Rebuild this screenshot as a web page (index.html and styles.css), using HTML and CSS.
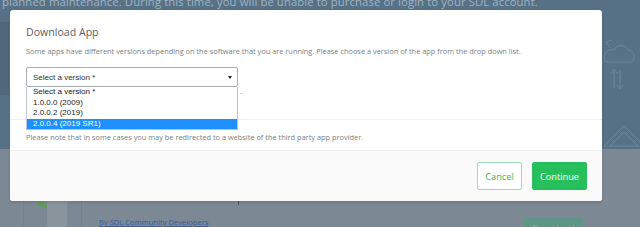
FILE: index.html
```html
<!DOCTYPE html>
<html lang="en">
<head>
<meta charset="utf-8">
<title>Download App</title>
<link rel="stylesheet" href="styles.css">
</head>
<body>
<div class="page">
  <div class="hero">
    <div class="strip"></div>
    <p class="notice">planned maintenance. During this time, you will be unable to purchase or login to your SDL account.</p>
    <svg class="art" width="40" height="130" viewBox="0 0 40 130" fill="none" stroke="#6d8799" stroke-width="1">
      <path d="M6 40 C2 34 6 26 14 28 C16 22 26 22 28 28 C34 28 36 36 32 40 Z"/>
      <path d="M10 26 L6 20 L12 18"/>
      <path d="M14 48 V66 M11 51 L14 47 L17 51 M20 48 V66 M17 63 L20 67 L23 63"/>
      <path d="M4 124 L24 104 L44 124 Z M10 124 L24 110 L38 124"/>
    </svg>
  </div>
  <div class="lower">
    <div class="card">
      <div class="thumb"><span class="stripe"></span><span class="img"></span></div>
      <div class="info">
        <span class="tick"></span>
        <a class="author">By SDL Community Developers</a>
      </div>
      <span class="dl-btn">Download</span>
    </div>
  </div>
</div>

<div class="modal">
  <div class="modal-body">
    <h2 class="title">Download App</h2>
    <p class="desc">Some apps have different versions depending on the software that you are running. Please choose a version of the app from the drop down list.</p>
    <div class="select-wrap">
      <div class="select"><span>Select a version *</span><span class="arrow"></span></div>
      <ul class="options">
        <li>Select a version *</li>
        <li>1.0.0.0 (2009)</li>
        <li>2.0.0.2 (2019)</li>
        <li class="active">2.0.0.4 (2019 SR1)</li>
      </ul>
    </div>
    <div class="behind"><span>.</span></div>
  </div>
  <div class="modal-note">
    <p>Please note that in some cases you may be redirected to a website of the third party app provider.</p>
  </div>
  <div class="modal-footer">
    <button class="btn btn-cancel">Cancel</button>
    <button class="btn btn-continue">Continue</button>
  </div>
</div>
</body>
</html>
```
FILE: styles.css
```css
* { box-sizing: border-box; }
html, body { margin: 0; padding: 0; }
body {
  width: 640px;
  height: 227px;
  overflow: hidden;
  font-family: "Open Sans", "Noto Sans", sans-serif;
  background: #7c8894;
  position: relative;
}
.page { display: flex; flex-direction: column; height: 227px; }
.hero {
  height: 149px;
  background: #577286;
  position: relative;
  overflow: hidden;
}
.strip {
  position: absolute;
  left: 0; top: 22px;
  width: 9px; height: 73px;
  background: #4f687b;
}
.notice {
  margin: -6px 0 0 2px;
  font-size: 11.3px;
  line-height: 16px;
  color: #9fb3c2;
  white-space: nowrap;
  letter-spacing: 0.1px;
}
.art { position: absolute; right: 0; top: 22px; }
.lower { flex: 1; position: relative; }
.card { display: flex; height: 100%; }
.thumb {
  width: 59px;
  border-right: 1px solid #75818d;
  position: relative;
  margin-left: 23px;
  border-left: 1px solid #75818d;
}
.stripe {
  position: absolute; left: 13px; top: 54px;
  width: 12px; height: 4px; background: #5f9a5a; transform: rotate(20deg);
}
.img {
  position: absolute; left: 23px; top: 52px; width: 20px; height: 30px; background: #8a949d;
}
.info { flex: 1; position: relative; }
.tick { position: absolute; left: 156px; top: 52px; width: 1px; height: 4px; background: #4a535c; }
.author {
  position: absolute; left: 17px; top: 68px;
  font-size: 7.6px; line-height: 10px; color: #3b5c95; text-decoration: underline;
}
.dl-btn {
  position: absolute; left: 524px; top: 68px;
  width: 59px; height: 20px; border-radius: 2px;
  background: #5e9686; color: #7fb0a2; font-size: 9px;
  display: flex; justify-content: center; padding-top: 5px;
}

.modal {
  position: absolute;
  left: 10px; top: 10px;
  width: 592px; height: 191px;
  background: #fff;
  border-radius: 3px;
  display: flex; flex-direction: column;
  overflow: visible;
  box-shadow: 0 1px 3px rgba(0,0,0,0.15);
}
.modal-body {
  height: 110px;
  padding: 13px 16px 0;
  border-bottom: 1px solid #eef0f2;
  position: relative;
}
.title {
  margin: 0;
  font-size: 10.6px;
  line-height: 18px;
  font-weight: 400;
  color: #5a5f66;
}
.desc {
  margin: 5px 0 0;
  font-size: 7.4px;
  line-height: 10px;
  color: #7b7f84;
  white-space: nowrap;
}
.select-wrap { position: relative; width: 212px; margin-top: 11px; }
.select {
  height: 20px;
  border: 1px solid #a9adb2;
  border-radius: 2px;
  display: flex; align-items: center; justify-content: space-between;
  padding: 0 5px 0 6px;
  font-family: "Liberation Sans", "Open Sans", sans-serif;
  font-size: 8px;
  color: #333;
}
.arrow {
  width: 0; height: 0;
  border-left: 2px solid transparent;
  border-right: 2px solid transparent;
  border-top: 3px solid #222;
}
.options {
  position: absolute;
  left: 0; top: 20px;
  width: 212px;
  margin: 0; padding: 0;
  list-style: none;
  background: #fff;
  border: 1px solid #b9c3d3;
  border-top: none;
  z-index: 2;
  font-family: "Liberation Sans", "Open Sans", sans-serif;
  font-size: 8px;
  color: #222;
}
.options li { height: 10.6px; line-height: 10.6px; padding-left: 6px; }
.options li.active { background: #1e90ff; color: #fff; }
.behind {
  width: 216px; text-align: right;
  font-size: 8px; color: #777; margin-top: -2px;
}
.modal-note {
  height: 31px;
  padding: 12px 16px 0;
  border-bottom: 1px solid #eef0f2;
}
.modal-note p {
  margin: 0;
  font-size: 7.4px;
  line-height: 10px;
  color: #7b7f84;
  white-space: nowrap;
}
.modal-footer {
  flex: 1;
  background: #fafafa;
  border-radius: 0 0 3px 3px;
  display: flex; justify-content: flex-end; align-items: flex-start;
  gap: 10px;
  padding: 11px 15px 0 0;
}
.btn {
  height: 28px;
  border-radius: 2px;
  font-family: "Open Sans", sans-serif;
  font-size: 9.2px;
  padding: 0;
  cursor: pointer;
}
.btn-cancel {
  width: 45px;
  background: #fff;
  border: 1px solid #9edcb3;
  color: #2dbb5d;
}
.btn-continue {
  width: 55px;
  background: #27bf5b;
  border: 1px solid #27bf5b;
  color: #fff;
}
```
